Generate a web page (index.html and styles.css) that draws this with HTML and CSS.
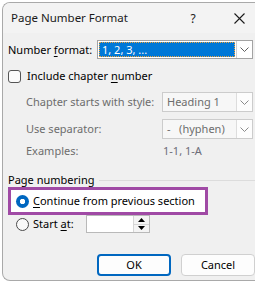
FILE: index.html
```html
<!DOCTYPE html>
<html>
<head>
<meta charset="utf-8">
<link rel="stylesheet" href="styles.css">
</head>
<body>
<div class="window">
  <div class="titlebar">
    <span class="title">Page Number Format</span>
    <span class="tb-btn help">?</span>
    <span class="tb-btn close"><svg width="11" height="11" viewBox="0 0 11 11"><path d="M0.5 0.5 L10.5 10.5 M10.5 0.5 L0.5 10.5" stroke="#1b1b1b" stroke-width="1.1" fill="none"/></svg></span>
  </div>
  <div class="content">
    <div class="row row-fmt">
      <span class="label-fmt">Number <u>f</u>ormat:</span>
      <div class="select sel-main">
        <div class="sel-value"><span class="focus-val">1, 2, 3, ...</span></div>
        <div class="sel-btn"><svg width="9" height="5" viewBox="0 0 9 5"><path d="M0.5 0.5 L4.5 4.5 L8.5 0.5" stroke="#5f5f5f" stroke-width="1" fill="none"/></svg></div>
      </div>
    </div>

    <div class="row row-check">
      <span class="checkbox"></span>
      <span class="check-label">Include chapter <u>n</u>umber</span>
    </div>

    <div class="row row-sub row-sel2">
      <span class="sub-label">Chapter starts with style:</span>
      <div class="select sel-small disabled">
        <div class="sel-value"><span>Heading 1</span></div>
        <div class="sel-btn"><svg width="9" height="5" viewBox="0 0 9 5"><path d="M0.5 0.5 L4.5 4.5 L8.5 0.5" stroke="#8a8a8a" stroke-width="1" fill="none"/></svg></div>
      </div>
    </div>

    <div class="row row-sub row-sel3">
      <span class="sub-label">Use separator:</span>
      <div class="select sel-small disabled">
        <div class="sel-value"><span>-&nbsp;&nbsp;&nbsp;(hyphen)</span></div>
        <div class="sel-btn"><svg width="9" height="5" viewBox="0 0 9 5"><path d="M0.5 0.5 L4.5 4.5 L8.5 0.5" stroke="#8a8a8a" stroke-width="1" fill="none"/></svg></div>
      </div>
    </div>

    <div class="row row-sub row-examples">
      <span class="sub-label">Examples:</span>
      <span class="examples-val">1-1, 1-A</span>
    </div>

    <div class="group-head">
      <span class="group-label">Page numbering</span>
      <span class="group-line"></span>
    </div>

    <div class="row row-radio highlight">
      <span class="radio checked"></span>
      <span class="radio-label"><u>C</u>ontinue from previous section</span>
    </div>

    <div class="row row-radio row-start">
      <span class="radio"></span>
      <span class="radio-label start-label">Start <u>a</u>t:</span>
      <div class="spin">
        <div class="spin-field"></div>
        <div class="spin-btns">
          <span class="spin-btn"><svg width="7" height="4" viewBox="0 0 7 4"><path d="M0 4 L3.5 0 L7 4 Z" fill="#000"/></svg></span>
          <span class="spin-btn"><svg width="7" height="4" viewBox="0 0 7 4"><path d="M0 0 L3.5 4 L7 0 Z" fill="#000"/></svg></span>
        </div>
      </div>
    </div>

    <div class="buttons">
      <button class="btn btn-ok">OK</button>
      <button class="btn">Cancel</button>
    </div>
  </div>
</div>
</body>
</html>
```

FILE: styles.css
```css
html, body {
  margin: 0;
  padding: 0;
  background: #ffffff;
  overflow: hidden;
  width: 255px;
  height: 282px;
}

body {
  font-family: "Noto Sans", "Open Sans", sans-serif;
  font-size: 11px;
  color: #000;
}

u {
  text-decoration-thickness: 1px;
  text-underline-offset: 2px;
}

.window {
  margin: 2px 0 0 2px;
  width: 258px;
  height: 279px;
  box-sizing: border-box;
  border-left: 1px solid #a9a9a9;
  border-top: 1px solid #a9a9a9;
  border-bottom: 1px solid #a9a9a9;
  border-radius: 8px 0 0 8px;
  background: #f0f0f0;
  overflow: hidden;
}

.titlebar {
  height: 30px;
  display: flex;
  align-items: center;
  padding-left: 8px;
  background: #f3f3f3;
}

.title {
  flex: 1;
  font-size: 11.5px;
  line-height: 16px;
  color: #1a1a1a;
}

.tb-btn {
  width: 46px;
  height: 30px;
  display: flex;
  align-items: center;
  justify-content: center;
}

.help {
  font-size: 12px;
  color: #1a1a1a;
}

.close {
  margin-right: -2px;
}

.content {
  padding: 0 5px;
}

.row {
  display: flex;
  align-items: center;
}

.row-fmt {
  margin-top: 7px;
  height: 19px;
}

.label-fmt {
  width: 89px;
  line-height: 16px;
}

.select {
  display: flex;
  height: 19px;
  box-sizing: border-box;
  border: 1px solid #a3a3a3;
  background: #fff;
}

.sel-main {
  width: 156px;
}

.sel-value {
  flex: 1;
  display: flex;
  align-items: center;
  padding: 1px;
}

.focus-val {
  flex: 1;
  height: 100%;
  box-sizing: border-box;
  background: #0078d7;
  color: #fff;
  outline: 1px dotted #f2a33a;
  outline-offset: -1px;
  padding-left: 3px;
  line-height: 15px;
}

.sel-btn {
  width: 15px;
  border-left: 1px solid #d0d0d0;
  display: flex;
  align-items: center;
  justify-content: center;
  background: #fff;
}

.row-check {
  margin-top: 8px;
  height: 18px;
}

.checkbox {
  width: 11px;
  height: 11px;
  border: 1px solid #555;
  border-radius: 3px;
  background: #fbfbfb;
  margin-right: 6px;
}

.check-label {
  line-height: 16px;
}

.row-sub {
  padding-left: 18px;
  color: #6d6d6d;
}

.sub-label {
  width: 136px;
  line-height: 16px;
}

.row-sel2 {
  margin-top: 7px;
  height: 20px;
}

.row-sel3 {
  margin-top: 7px;
  height: 20px;
}

.sel-small {
  width: 91px;
  height: 20px;
  border-color: #cccccc;
  background: #f7f7f7;
}

.disabled .sel-value {
  padding-left: 4px;
  color: #6d6d6d;
  line-height: 16px;
}

.disabled .sel-btn {
  border-left-color: #dddddd;
  background: #fdfdfd;
}

.row-examples {
  margin-top: 4px;
  height: 16px;
}

.examples-val {
  padding-left: 1px;
  line-height: 16px;
  color: #6d6d78;
}

.group-head {
  margin-top: 13px;
  height: 15px;
  display: flex;
  align-items: center;
}

.group-label {
  line-height: 15px;
}

.group-line {
  flex: 1;
  height: 1px;
  background: #dcdcdc;
  margin-left: 5px;
  margin-top: 2px;
}

.row-radio {
  height: 22px;
}

.highlight {
  width: 200px;
  height: 28px;
  box-sizing: border-box;
  border: 3px solid #a04aa5;
  background: #ffffff;
  padding-left: 5px;
}

.radio {
  width: 13px;
  height: 13px;
  box-sizing: border-box;
  border: 1px solid #4a4a4a;
  border-radius: 50%;
  background: #f9f9f9;
  margin-right: 4px;
  flex: none;
}

.radio.checked {
  border: none;
  background: radial-gradient(circle, #ffffff 0 2.4px, #0067c0 3px);
}

.radio-label {
  line-height: 16px;
}

.row-start {
  height: 18px;
  padding-left: 8px;
}

.start-label {
  width: 53px;
}

.spin {
  width: 64px;
  height: 18px;
  box-sizing: border-box;
  border: 1px solid #b9b9b9;
  background: #fff;
  display: flex;
}

.spin-field {
  flex: 1;
}

.spin-btns {
  width: 16px;
  display: flex;
  flex-direction: column;
}

.spin-btn {
  flex: 1;
  display: flex;
  align-items: center;
  justify-content: center;
  background: #f4f4f4;
  border-left: 1px solid #d6d6d6;
}

.spin-btn + .spin-btn {
  border-top: 1px solid #d6d6d6;
}

.buttons {
  margin-top: 21px;
  display: flex;
  justify-content: flex-end;
  gap: 10px;
}

.btn {
  width: 74px;
  height: 22px;
  box-sizing: border-box;
  border: 1px solid #d0d0d0;
  border-radius: 4px;
  background: #fdfdfd;
  font-family: "Noto Sans", "Open Sans", sans-serif;
  font-size: 11px;
  color: #000;
  padding: 0;
  line-height: 18px;
}

.btn-ok {
  border: 2px solid #0067c0;
}
```
